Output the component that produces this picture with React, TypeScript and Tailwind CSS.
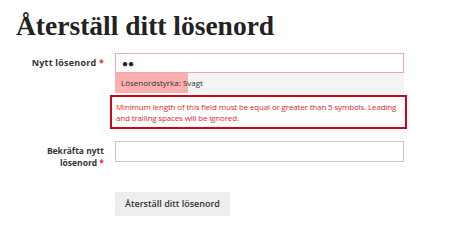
export default function App() {
  return (
    <div className="w-[474px] h-[228px] bg-white overflow-hidden" style={{ fontFamily: '"Open Sans", sans-serif' }}>
      <h1
        className="pl-[16px] pt-[10px] text-[27.5px] leading-[32px] font-bold text-[#222]"
        style={{ fontFamily: '"Liberation Serif", serif' }}
      >
        Återställ ditt lösenord
      </h1>

      <form className="mt-[11px] flex flex-col">
        {/* Nytt lösenord */}
        <div className="flex">
          <label className="w-[106px] pr-[2px] pt-[4px] text-right text-[9px] font-bold leading-[12px] tracking-[0.2px] text-[#333]">
            Nytt lösenord <span className="text-[#e02b27]">*</span>
          </label>
          <div className="ml-[9px] flex w-[289px] flex-col">
            <div className="flex h-[20px] items-center border border-[#f0a8a8] bg-white px-[6px] text-[10px] leading-none text-[#222]">
              ●●
            </div>
            <div className="relative h-[20px] bg-[#f4f4f4]">
              <div className="absolute inset-y-0 left-0 w-[73px] bg-[#f9b0ae]" />
              <span className="relative block pl-[6px] pt-[3px] text-[8px] leading-[14px] text-[#333]">
                Lösenordstyrka: Svagt
              </span>
            </div>
            <div className="-ml-[5px] mt-[2px] w-[297px] border-2 border-[#d0021b] px-[4px] py-[4px] text-[8px] leading-[11px] tracking-[-0.15px] text-[#e02b27]">
              Minimum length of this field must be equal or greater than 5 symbols. Leading and trailing spaces will be ignored.
            </div>
          </div>
        </div>

        {/* Bekräfta nytt lösenord */}
        <div className="mt-[12px] flex">
          <label className="w-[106px] pr-[2px] pt-[4px] text-right text-[8.5px] font-bold leading-[12px] text-[#333]">
            Bekräfta nytt
            <br />
            lösenord <span className="text-[#e02b27]">*</span>
          </label>
          <div className="ml-[9px] h-[21px] w-[289px] border border-[#c8c8c8] bg-white" />
        </div>

        <div className="ml-[115px] mt-[20px]">
          <button
            type="button"
            className="h-[24px] w-[115px] bg-[#eeeeee] text-[9px] font-semibold text-[#333]"
          >
            Återställ ditt lösenord
          </button>
        </div>
      </form>
    </div>
  );
}
